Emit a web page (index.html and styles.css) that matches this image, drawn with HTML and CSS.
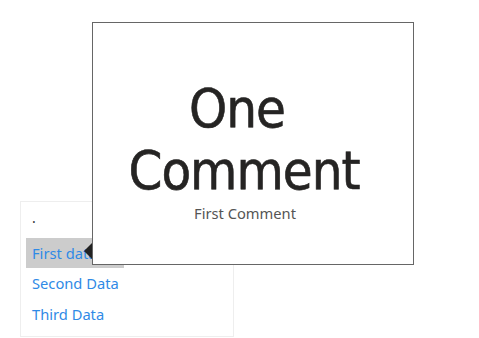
FILE: index.html
```html
<!DOCTYPE html>
<html>
<head>
<meta charset="utf-8">
<link rel="stylesheet" href="styles.css">
</head>
<body>
<div class="stage">
  <div class="list">
    <div class="dot">.</div>
    <div class="item active">First data</div>
    <div class="item">Second Data</div>
    <div class="item">Third Data</div>
  </div>
  <div class="arrow"></div>
  <div class="popup">
    <div class="big">
      <span class="line one">One</span>
      <span class="line">Comment</span>
    </div>
    <div class="sub">First Comment</div>
  </div>
</div>
</body>
</html>
```
FILE: styles.css
```css
html, body {
  margin: 0;
  padding: 0;
  background: #fff;
}
.stage {
  position: relative;
  width: 479px;
  height: 338px;
  overflow: hidden;
  font-family: "Noto Sans", "Open Sans", sans-serif;
}
.list {
  box-sizing: border-box;
  margin: 201px 0 0 20px;
  width: 214px;
  height: 136px;
  border: 1px solid #eeeeee;
  padding: 6px 5px 0 5px;
}
.dot {
  height: 30px;
  font-size: 14px;
  line-height: 20px;
  color: #333;
  padding-left: 6px;
}
.item {
  height: 30.5px;
  line-height: 31px;
  font-size: 14.7px;
  color: #2f8ae6;
  padding-left: 6px;
  white-space: nowrap;
}
.item.active {
  width: 92px;
  height: 30px;
  background: #cccccc;
}
.arrow {
  position: absolute;
  left: 84px;
  top: 243px;
  width: 0;
  height: 0;
  border-top: 8px solid transparent;
  border-bottom: 8px solid transparent;
  border-right: 8px solid #222;
}
.popup {
  position: absolute;
  left: 92px;
  top: 22px;
  box-sizing: border-box;
  width: 322px;
  height: 243px;
  border: 1px solid #666;
  background: #fff;
  display: flex;
  flex-direction: column;
  align-items: center;
  padding: 55px 18px 0 0;
}
.big {
  font-family: "DejaVu Sans Condensed", "DejaVu Sans", sans-serif;
  font-size: 54px;
  line-height: 62px;
  color: #252423;
  letter-spacing: -1px;
  text-align: center;
  -webkit-text-stroke: 0.6px #252423;
}
.line {
  display: block;
}
.line.one {
  padding-right: 14px;
}
.sub {
  margin-top: 2px;
  padding-left: 2px;
  font-size: 14.7px;
  line-height: 18px;
  color: #555555;
}
```
